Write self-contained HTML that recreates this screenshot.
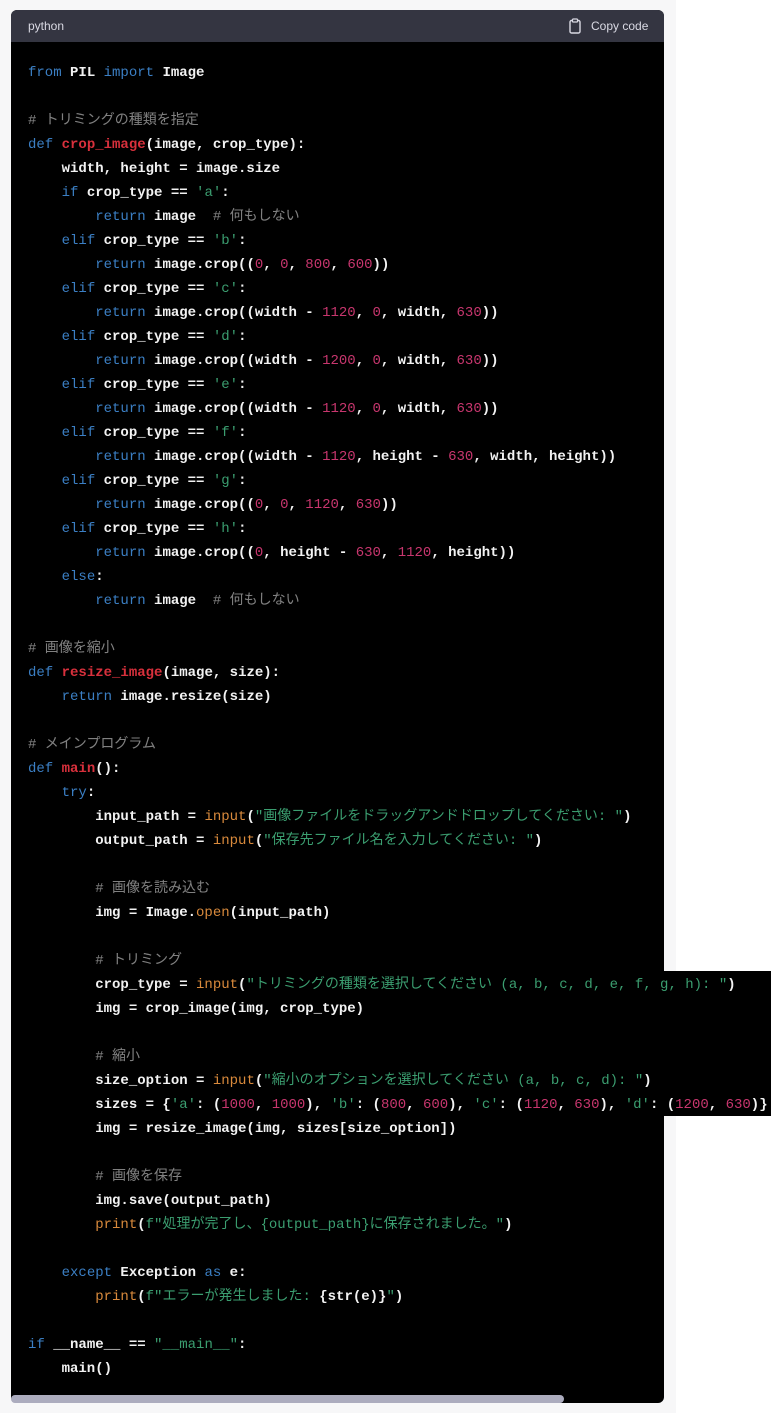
<!DOCTYPE html>
<html><head><meta charset="utf-8"><style>
html,body{margin:0;padding:0;width:781px;height:1413px;background:#fff;overflow:hidden}
.bg{position:absolute;left:0;top:0;width:676px;height:1413px;background:#f7f7f8}
.blk{position:absolute;left:11px;top:10px;width:653px;height:1393px;background:#000;border-radius:6px;overflow:visible}
.hd{height:32px;background:#343541;border-radius:6px 6px 0 0;color:#d9d9e3;font:12px "Liberation Sans",sans-serif;position:relative}
.hd .l{position:absolute;left:17px;top:9px}
.hd .r{position:absolute;left:558px;top:9px}
.hd svg{position:absolute;left:557px;top:8px}
.patch{position:absolute;left:664px;top:971px;width:107px;height:145px;background:#000}
pre{position:absolute;left:28px;top:60.5px;margin:0;font:bold 14px/24.02px "Liberation Mono","Noto Sans CJK JP",monospace;color:#f2f2f2;white-space:pre}
.k{color:#3b7fc4;font-weight:normal}.f{color:#d8303c}.s{color:#3b9e70;font-weight:normal}.n{color:#c8366e;font-weight:normal}.c{color:#ffffff80;font-weight:normal}.b{color:#d98a3c;font-weight:normal}
.sb{position:absolute;left:11px;top:1395px;width:553px;height:8px;background:#acacbe;border-radius:4px}
</style></head><body>
<div class="bg"></div>
<div class="patch"></div>
<div class="blk"><div class="hd"><span class="l">python</span>
<svg width="14" height="16" viewBox="0 0 14 16"><rect x="2" y="2.5" width="10" height="12.5" rx="1.5" fill="none" stroke="#d9d9e3" stroke-width="1.4"/><rect x="4.5" y="1" width="5" height="3" rx="0.8" fill="#343541" stroke="#d9d9e3" stroke-width="1.2"/></svg>
<span class="r" style="left:580px">Copy code</span></div></div>
<pre><span class="k">from</span> PIL <span class="k">import</span> Image

<span class="c"># トリミングの種類を指定</span>
<span class="k">def</span> <span class="f">crop_image</span>(image, crop_type):
    width, height = image.size
    <span class="k">if</span> crop_type == <span class="s">'a'</span>:
        <span class="k">return</span> image  <span class="c"># 何もしない</span>
    <span class="k">elif</span> crop_type == <span class="s">'b'</span>:
        <span class="k">return</span> image.crop((<span class="n">0</span>, <span class="n">0</span>, <span class="n">800</span>, <span class="n">600</span>))
    <span class="k">elif</span> crop_type == <span class="s">'c'</span>:
        <span class="k">return</span> image.crop((width - <span class="n">1120</span>, <span class="n">0</span>, width, <span class="n">630</span>))
    <span class="k">elif</span> crop_type == <span class="s">'d'</span>:
        <span class="k">return</span> image.crop((width - <span class="n">1200</span>, <span class="n">0</span>, width, <span class="n">630</span>))
    <span class="k">elif</span> crop_type == <span class="s">'e'</span>:
        <span class="k">return</span> image.crop((width - <span class="n">1120</span>, <span class="n">0</span>, width, <span class="n">630</span>))
    <span class="k">elif</span> crop_type == <span class="s">'f'</span>:
        <span class="k">return</span> image.crop((width - <span class="n">1120</span>, height - <span class="n">630</span>, width, height))
    <span class="k">elif</span> crop_type == <span class="s">'g'</span>:
        <span class="k">return</span> image.crop((<span class="n">0</span>, <span class="n">0</span>, <span class="n">1120</span>, <span class="n">630</span>))
    <span class="k">elif</span> crop_type == <span class="s">'h'</span>:
        <span class="k">return</span> image.crop((<span class="n">0</span>, height - <span class="n">630</span>, <span class="n">1120</span>, height))
    <span class="k">else</span>:
        <span class="k">return</span> image  <span class="c"># 何もしない</span>

<span class="c"># 画像を縮小</span>
<span class="k">def</span> <span class="f">resize_image</span>(image, size):
    <span class="k">return</span> image.resize(size)

<span class="c"># メインプログラム</span>
<span class="k">def</span> <span class="f">main</span>():
    <span class="k">try</span>:
        input_path = <span class="b">input</span>(<span class="s">"画像ファイルをドラッグアンドドロップしてください: "</span>)
        output_path = <span class="b">input</span>(<span class="s">"保存先ファイル名を入力してください: "</span>)

        <span class="c"># 画像を読み込む</span>
        img = Image.<span class="b">open</span>(input_path)

        <span class="c"># トリミング</span>
        crop_type = <span class="b">input</span>(<span class="s">"トリミングの種類を選択してください (a, b, c, d, e, f, g, h): "</span>)
        img = crop_image(img, crop_type)

        <span class="c"># 縮小</span>
        size_option = <span class="b">input</span>(<span class="s">"縮小のオプションを選択してください (a, b, c, d): "</span>)
        sizes = {<span class="s">'a'</span>: (<span class="n">1000</span>, <span class="n">1000</span>), <span class="s">'b'</span>: (<span class="n">800</span>, <span class="n">600</span>), <span class="s">'c'</span>: (<span class="n">1120</span>, <span class="n">630</span>), <span class="s">'d'</span>: (<span class="n">1200</span>, <span class="n">630</span>)}
        img = resize_image(img, sizes[size_option])

        <span class="c"># 画像を保存</span>
        img.save(output_path)
        <span class="b">print</span>(<span class="s">f"処理が完了し、</span><span class="s">{output_path}</span><span class="s">に保存されました。"</span>)

    <span class="k">except</span> Exception <span class="k">as</span> e:
        <span class="b">print</span>(<span class="s">f"エラーが発生しました: </span>{str(e)}<span class="s">"</span>)

<span class="k">if</span> __name__ == <span class="s">"__main__"</span>:
    main()</pre>
<div class="sb"></div>
</body></html>
